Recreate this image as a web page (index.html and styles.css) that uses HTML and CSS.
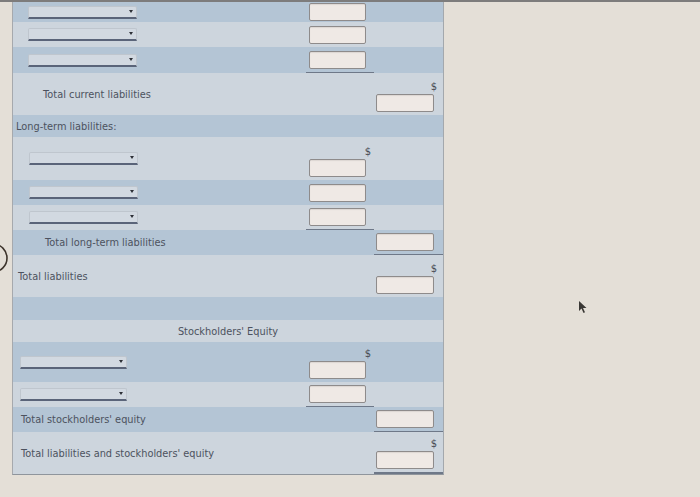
FILE: index.html
```html
<!DOCTYPE html>
<html>
<head>
<meta charset="utf-8">
<link rel="stylesheet" href="styles.css">
</head>
<body>
<div class="topbar"></div>
<div class="page">
  <div class="sheet">
    <div class="row dark h20">
      <div class="lab"><span class="sel s1"></span></div>
      <div class="mid"><span class="inp"></span></div>
      <div class="rgt"></div>
    </div>
    <div class="row light h25">
      <div class="lab"><span class="sel s1"></span></div>
      <div class="mid"><span class="inp"></span></div>
      <div class="rgt"></div>
    </div>
    <div class="row dark h26">
      <div class="lab"><span class="sel s1"></span></div>
      <div class="mid line"><span class="inp"></span></div>
      <div class="rgt"></div>
    </div>
    <div class="row light h42">
      <div class="lab"><span class="txt t30">Total current liabilities</span></div>
      <div class="mid"></div>
      <div class="rgt tall"><span class="dollar">$</span><span class="inp"></span></div>
    </div>
    <div class="row dark h22">
      <div class="lab"><span class="txt t3">Long-term liabilities:</span></div>
      <div class="mid"></div>
      <div class="rgt"></div>
    </div>
    <div class="row light h43">
      <div class="lab"><span class="sel s2"></span></div>
      <div class="mid tall"><span class="dollar">$</span><span class="inp"></span></div>
      <div class="rgt"></div>
    </div>
    <div class="row dark h25">
      <div class="lab"><span class="sel s2"></span></div>
      <div class="mid"><span class="inp"></span></div>
      <div class="rgt"></div>
    </div>
    <div class="row light h25">
      <div class="lab"><span class="sel s2"></span></div>
      <div class="mid line"><span class="inp"></span></div>
      <div class="rgt"></div>
    </div>
    <div class="row dark h25">
      <div class="lab"><span class="txt t32">Total long-term liabilities</span></div>
      <div class="mid"></div>
      <div class="rgt line"><span class="inp"></span></div>
    </div>
    <div class="row light h42">
      <div class="lab"><span class="txt t5">Total liabilities</span></div>
      <div class="mid"></div>
      <div class="rgt tall"><span class="dollar">$</span><span class="inp"></span></div>
    </div>
    <div class="row dark h23"></div>
    <div class="row light h22 center">
      <span class="txt">Stockholders' Equity</span>
    </div>
    <div class="row dark h40">
      <div class="lab"><span class="sel s3"></span></div>
      <div class="mid tall"><span class="dollar">$</span><span class="inp"></span></div>
      <div class="rgt"></div>
    </div>
    <div class="row light h25">
      <div class="lab"><span class="sel s3"></span></div>
      <div class="mid line"><span class="inp"></span></div>
      <div class="rgt"></div>
    </div>
    <div class="row dark h25">
      <div class="lab"><span class="txt t8">Total stockholders' equity</span></div>
      <div class="mid"></div>
      <div class="rgt line"><span class="inp"></span></div>
    </div>
    <div class="row light h42">
      <div class="lab"><span class="txt t8">Total liabilities and stockholders' equity</span></div>
      <div class="mid"></div>
      <div class="rgt tall line2"><span class="dollar">$</span><span class="inp"></span></div>
    </div>
  </div>
</div>
<svg class="arc" width="12" height="34" viewBox="0 0 12 34"><circle cx="-7" cy="17" r="14" fill="none" stroke="#3d342c" stroke-width="1.6"/></svg>
<svg class="cursor" width="10" height="14" viewBox="0 0 10 14"><path d="M1 1 L1 11 L3.5 8.5 L5.5 13 L7 12.3 L5 8 L8.5 8 Z" fill="#3a3835"/></svg>
</body>
</html>
```

FILE: styles.css
```css
html, body {
  margin: 0;
  padding: 0;
}
body {
  background: #e4dfd7;
  width: 700px;
  height: 497px;
  overflow: hidden;
  position: relative;
  font-family: "DejaVu Sans", Verdana, sans-serif;
  font-size: 9.8px;
  color: #4c525e;
}
.topbar {
  height: 2px;
  background: #7d7c7c;
}
.page {
  display: flex;
  padding-left: 12px;
}
.sheet {
  width: 430px;
  border-left: 1px solid #a6a9ad;
  border-right: 1px solid #a3a8ad;
  border-bottom: 1px solid #8f959c;
  display: flex;
  flex-direction: column;
}
.row {
  display: grid;
  grid-template-columns: 293px 68px 69px;
  box-sizing: border-box;
}
.dark { background: #b4c5d5; }
.light { background: #cdd5dd; }
.h20 { height: 20px; }
.h22 { height: 22px; }
.h23 { height: 23px; }
.h25 { height: 25px; }
.h26 { height: 26px; }
.h40 { height: 40px; }
.h42 { height: 42px; }
.h43 { height: 43px; }
.center {
  display: flex;
  align-items: center;
  justify-content: center;
}
.lab {
  display: flex;
  align-items: center;
}
.mid, .rgt {
  display: flex;
  align-items: center;
  box-sizing: border-box;
}
.mid { padding-left: 3px; }
.rgt { padding-left: 2px; }
.tall {
  flex-direction: column;
  align-items: flex-start;
  justify-content: flex-end;
  padding-bottom: 3px;
}
.line { border-bottom: 1px solid #6e7888; }
.line2 { border-bottom: 2px solid #6e7888; }
.dollar {
  align-self: flex-end;
  margin-right: 6px;
  margin-bottom: 1px;
  font-size: 10px;
  line-height: 12px;
  color: #474b53;
}
.mid .dollar { margin-right: 3px; }
.inp {
  display: block;
  width: 57px;
  height: 18px;
  box-sizing: border-box;
  background: #efe9e5;
  border: 1px solid #8e8b8b;
  border-radius: 2px;
  box-shadow: inset 0 1px 1px rgba(0,0,0,0.08);
}
.rgt .inp { width: 58px; }
.sel {
  display: block;
  height: 13px;
  box-sizing: border-box;
  background: #d2d9e1;
  border: 1px solid #bfc6ce;
  border-bottom: 2px solid #5a6479;
  border-radius: 2px 2px 0 0;
  position: relative;
}
.sel::after {
  content: "";
  position: absolute;
  right: 3px;
  top: 3px;
  border-left: 2.5px solid transparent;
  border-right: 2.5px solid transparent;
  border-top: 3px solid #2c2f36;
}
.s1 { margin-left: 15px; width: 109px; }
.s2 { margin-left: 16px; width: 109px; }
.s3 { margin-left: 7px; width: 107px; }
.txt { white-space: nowrap; }
.t30 { margin-left: 30px; }
.t3 { margin-left: 3px; }
.t32 { margin-left: 32px; }
.t5 { margin-left: 5px; }
.t8 { margin-left: 8px; }
.arc {
  position: absolute;
  left: 0;
  top: 241px;
}
.cursor {
  position: absolute;
  left: 578px;
  top: 300px;
}
```
